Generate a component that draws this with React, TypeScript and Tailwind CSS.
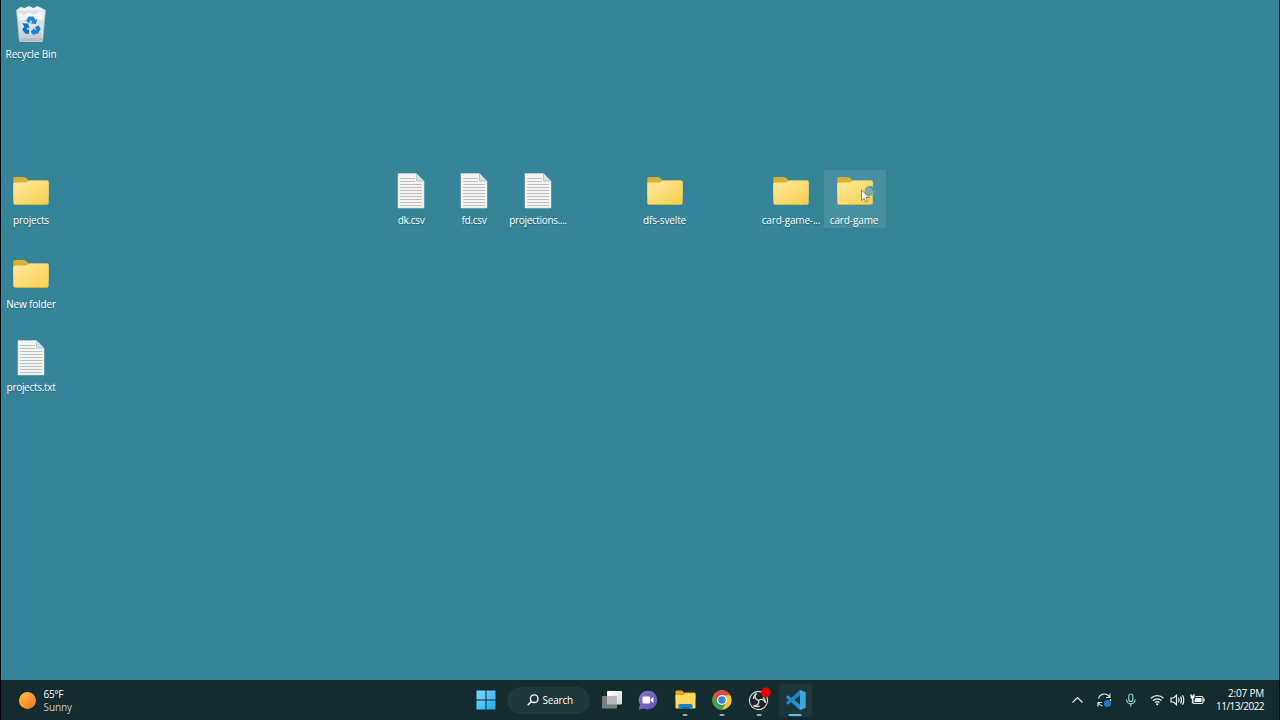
import type { ReactNode } from "react";

const FolderIcon = () => (
  <svg width="36" height="30" viewBox="0 0 36 30">
    <defs>
      <linearGradient id="folder" x1="0" y1="0" x2="1" y2="1">
        <stop offset="0" stopColor="#ffeaa2" />
        <stop offset="1" stopColor="#f8cf4b" />
      </linearGradient>
    </defs>
    <path d="M.3 3Q.3 1 2 1h9q1 0 2 1l3 2.500h18q1.700 0 1.700 2V20H.3z" fill="#d9b137" />
    <path d="M.3 8Q.3 6.500 1.800 6.500H12q1.500 0 2.500-.8l.8-.6q.7-.5 1.700-.5h17q1.700 0 1.700 2V26.500q0 2-2 2H2q-1.700 0-1.700-2z" fill="url(#folder)" />
    <path d="M.8 27.500q.5 1 1.500 1h31.500q1 0 1.500-1" fill="none" stroke="#e3b93d" strokeWidth=".8" />
  </svg>
);

const FileIcon = () => (
  <svg width="28" height="36" viewBox="0 0 28 36">
    <path d="M1 .5h18.500L27 8v27H1z" fill="#f4f4f3" stroke="#d2d8d8" strokeWidth=".6" />
    <path
      d="M3 5.500h15M3 8.500h15M3 11.500h22M3 14.500h22M3 17.500h22M3 20.500h22M3 23.500h22M3 26.500h22M3 29.500h22M3 32.500h22"
      stroke="#c0c0c0"
      strokeWidth="1"
    />
    <path d="M19.500.5V8H27z" fill="#d5e1e6" stroke="#94b1bb" strokeWidth=".6" />
  </svg>
);

const BinIcon = () => (
  <svg width="32" height="38" viewBox="0 0 32 38">
    <path d="M1.500 5l4-3 4 1 4-2 5 2 4-2 4 2 4 2-1 5H3z" fill="#eef1f2" />
    <path d="M1.500 5.500h29L27.500 36q-.2 1-1.500 1H6q-1.300 0-1.500-1z" fill="#d9e2e7" />
    <path d="M3 7l6 3 5-3 5 3 6-4 4 2-1 7H4z" fill="#f3f5f6" />
    <path d="M4 27l6-2 5 4 6-4 6 3-1 6H5z" fill="#c6d1d8" />
    <path d="M1.500 5.500l3 30.500h23l3-30.500" fill="none" stroke="#b8c8cf" strokeWidth=".8" />
    <path d="M5 33h22l-.5 3.500h-21z" fill="#b4bfc5" />
    <g transform="translate(16 19.500) scale(1.050) translate(-16 -19.700)">
      <path d="M11.200 16.200l2.600-4.200h4.400l2.200 3.200 1.700-1-1.500 5.200-5.200-.8 1.800-1.200-1.300-1.800-1.700 2.800z" fill="#2588cf" />
      <path d="M7.700 18.500l5.300.2 1.800 4.600-1.800-.8-1.300 1.900h2.500v4.100h-3.700L7.700 24.500l1.800-3z" fill="#1871ba" />
      <path d="M15.600 26.800l3.700-3.900v1.900h1.800l-1.300-2.400 3.500-2 1.900 3.500-2.600 4.600h-3.300v2z" fill="#2181cb" />
    </g>
  </svg>
);

type Item = {
  name: string;
  x: number;
  y: number;
  kind: "bin" | "folder" | "file";
  tracking: string;
  selected?: boolean;
};

const items: Item[] = [
  { name: "Recycle Bin", x: 31, y: 3, kind: "bin", tracking: "pt-px tracking-[-0.13px]" },
  { name: "projects", x: 31, y: 170, kind: "folder", tracking: "tracking-[-0.2px]" },
  { name: "New folder", x: 31, y: 253, kind: "folder", tracking: "pt-px tracking-[-0.15px]" },
  { name: "projects.txt", x: 31, y: 337, kind: "file", tracking: "tracking-[-0.3px]" },
  { name: "dk.csv", x: 411, y: 170, kind: "file", tracking: "tracking-[-0.3px]" },
  { name: "fd.csv", x: 474, y: 170, kind: "file", tracking: "tracking-[-0.25px]" },
  { name: "projections....", x: 538, y: 170, kind: "file", tracking: "tracking-[-0.35px]" },
  { name: "dfs-svelte", x: 664.5, y: 170, kind: "folder", tracking: "tracking-[-0.15px]" },
  { name: "card-game-...", x: 791, y: 170, kind: "folder", tracking: "tracking-[-0.17px]" },
  { name: "card-game", x: 855, y: 170, kind: "folder", tracking: "pr-[2px] tracking-[-0.12px]", selected: true },
];

const DesktopItem = ({ name, x, y, kind, tracking, selected }: Item) => (
  <div
    className={`absolute flex h-[58px] w-[62px] -translate-x-1/2 flex-col items-center ${
      selected ? "bg-[#488fa1]" : ""
    }`}
    style={{ left: x, top: y }}
  >
    <div className="flex h-[42px] shrink-0 items-center justify-center">
      {kind === "bin" ? <BinIcon /> : kind === "folder" ? <FolderIcon /> : <FileIcon />}
    </div>
    <span
      className={`mt-[2px] text-[10px] leading-[13px] whitespace-nowrap text-white [text-shadow:0_1px_1px_rgba(0,0,0,0.25)] ${tracking}`}
    >
      {name}
    </span>
  </div>
);

const Cursor = () => (
  <svg className="absolute top-[184px] left-[860px]" width="16" height="20" viewBox="0 0 16 20">
    <circle cx="9.500" cy="7" r="4" fill="#86ab9b" stroke="#75a9a2" strokeWidth="2" />
    <path d="M9.500 3a4 4 0 0 1 4 4" fill="none" stroke="#4594af" strokeWidth="2" />
    <path d="M1.500 6v10.500L4 14.200l1.800 3.600 1.800-.9-1.700-3.500h3.400z" fill="#fff" stroke="#7a6a45" strokeWidth=".8" />
  </svg>
);

const StartIcon = () => (
  <svg width="20" height="20" viewBox="0 0 20 20">
    <defs>
      <linearGradient id="start" x1="0" y1="0" x2="20" y2="20" gradientUnits="userSpaceOnUse">
        <stop offset="0" stopColor="#83dcfb" />
        <stop offset="1" stopColor="#1ba4ed" />
      </linearGradient>
    </defs>
    <path d="M1 .5h8.500v9H.5V1zM10.500.5H19l.5.5v8.500h-9zM.5 10.500h9v9H1l-.5-.5zM10.500 10.500h9V19l-.5.5h-8.500z" fill="url(#start)" />
  </svg>
);

const TaskViewIcon = () => (
  <svg width="20" height="20" viewBox="0 0 20 20">
    <defs>
      <linearGradient id="task" x1="0" y1="0" x2="1" y2="1">
        <stop offset="0" stopColor="#fff" />
        <stop offset="1" stopColor="#d4d6d6" />
      </linearGradient>
    </defs>
    <rect x="5" y="1" width="15" height="13.500" rx="1" fill="url(#task)" />
    <rect x="0" y="6" width="15" height="12.500" rx="1" fill="#777f80" />
    <path d="M5 6h10v8.500H5z" fill="#b5b9b9" />
  </svg>
);

const ChatIcon = () => (
  <svg width="20" height="20" viewBox="0 0 20 20">
    <defs>
      <linearGradient id="chat" x1="0" y1="0" x2="1" y2="1">
        <stop offset="0" stopColor="#8e72ca" />
        <stop offset="1" stopColor="#5858b4" />
      </linearGradient>
    </defs>
    <path d="M10 .7a9.300 9.300 0 1 1-4 17.700L.8 19.500 2 14.800A9.300 9.300 0 0 1 10 .7z" fill="url(#chat)" />
    <rect x="4.500" y="6.500" width="7.500" height="7" rx="1" fill="#fff" />
    <path d="M12.500 9.200l3-2.200v6l-3-2.200z" fill="#fff" />
  </svg>
);

const ExplorerIcon = () => (
  <svg width="21" height="20" viewBox="0 0 21 20">
    <path d="M.5 1.500q0-1 1-1h5.500l2 2h10.500q1 0 1 1V9H.5z" fill="#e4a91d" />
    <path d="M.5 5h8l1.500-1.500h9.500q1 0 1 1v13q0 1-1 1h-18q-1 0-1-1z" fill="#ffda60" />
    <path d="M3.500 19V15.500q0-1.500 1.500-1.500h11q1.500 0 1.500 1.500V19z" fill="#1883c6" />
    <path d="M6.500 17h8v2h-8z" fill="#12649f" />
  </svg>
);

const ChromeIcon = () => (
  <svg width="20" height="20" viewBox="0 0 20 20">
    <circle cx="10" cy="10" r="9.700" fill="#f4c52d" />
    <path d="M1.600 5.150A9.700 9.700 0 0 1 18.400 5.150H10L5.800 12.400z" fill="#e04a3a" />
    <path d="M1.600 5.150A9.700 9.700 0 0 0 10 19.700l4.200-7.300-8.400 0z" fill="#37a451" />
    <circle cx="10" cy="10" r="4.900" fill="#fff" />
    <circle cx="10" cy="10" r="3.800" fill="#3b82e0" />
  </svg>
);

const ObsIcon = () => (
  <svg className="overflow-visible" width="22" height="22" viewBox="0 0 22 22">
    <circle cx="10.500" cy="11.500" r="9.100" fill="#202326" stroke="#d9dcdd" strokeWidth="1.100" />
    <g fill="none" stroke="#d3d6d7" strokeWidth="1.400">
      <path d="M8.500 4.500a4 4 0 0 0 2 7" />
      <path d="M17.400 14a4 4 0 0 0-7-2.200" />
      <path d="M5.600 16.500a4 4 0 0 0 5-5" />
      <path d="M8.500 4.500q-3 2-3 5.500M17.400 14q.3-3.500-2.400-5.700M5.600 16.500q3 2 6 .3" />
    </g>
    <circle cx="18" cy="3.500" r="4.900" fill="#ef0000" />
  </svg>
);

const CodeIcon = () => (
  <svg width="21" height="20" viewBox="0 0 21 20">
    <path d="M15 0l5.500 2.300v15.400L15 20 .8 7.200 3 5.200 15 14.500z" fill="#2592d2" />
    <path d="M15 0L.8 12.800 3 14.800 15 5.500z" fill="#1e88c7" />
    <path d="M15 0l5.500 2.300v15.400L15 20z" fill="#38a8e2" />
  </svg>
);

const TaskButton = ({ children, state }: { children: ReactNode; state?: "open" | "active" }) => (
  <div
    className={`relative flex h-[33px] w-[33px] items-center justify-center rounded-[3px] ${
      state === "active" ? "bg-[#1d363b]" : ""
    }`}
  >
    {children}
    {state && (
      <span
        className={`absolute bottom-[1px] left-1/2 h-[2px] -translate-x-1/2 rounded-full ${
          state === "active" ? "w-[13px] bg-[#63bde5]" : "w-[5px] bg-[#a2abad]"
        }`}
      />
    )}
  </div>
);

const Tray = () => (
  <svg width="136" height="20" viewBox="0 0 136 20" fill="none" stroke="#e8eded" strokeWidth="1.200">
    <path d="M2.500 12.500l5-5 5 5" />
    <g stroke="#d5dddd">
      <path d="M28.500 8.500a6 6 0 0 1 11-1.500M40 3.500V7.500h-4M28 16.500v-4h4M28.500 13a6 6 0 0 0 4 3M40.500 9v2" />
    </g>
    <circle cx="37.500" cy="13.500" r="3.500" fill="#207ac8" stroke="none" />
    <g stroke="#83d0d5">
      <rect x="58.800" y="4" width="4" height="7.500" rx="2" />
      <path d="M56.500 9.500a4.300 4.300 0 0 0 8.600 0M60.800 14v2.500" />
    </g>
    <g>
      <path d="M81 8.200a9 9 0 0 1 12.500 0M83 10.500a6.200 6.200 0 0 1 8.500 0M85 12.700a3.400 3.400 0 0 1 4.500 0" />
      <circle cx="87.250" cy="14.300" r="1" fill="#fff" stroke="none" />
    </g>
    <path d="M101 8h2.500l3-2.700v9.400l-3-2.700H101zM108.500 7.800q1.200 2.200 0 4.400M110.500 6.500q2 3.500 0 7M112.500 5.200q2.500 4.800 0 9.600" />
    <g>
      <path d="M125.500 6.500h6q1.500 0 1.500 1.500v4q0 1.500-1.500 1.500h-7q-1.500 0-1.500-1.500v-2" />
      <path d="M125.500 8h6v4h-7v-2z" fill="#fff" stroke="none" />
      <path d="M134 8.500v3" strokeWidth="1.300" />
      <path d="M121 4v2M124 4v2M122.500 8v5.500" />
      <path d="M120.500 5.500h4v1.500q0 2-2 2t-2-2z" fill="#fff" stroke="none" />
    </g>
  </svg>
);

const Taskbar = () => (
  <footer className="flex h-10 shrink-0 items-center bg-[#142b30] text-[10px] leading-[13px] text-white">
    <div className="flex flex-1 items-center gap-[7.5px] pl-[18px]">
      <div className="h-[17px] w-[17px] rounded-full bg-linear-to-br from-[#ffbd48] to-[#ef7515]" />
      <div className="pt-px">
        <div className="tracking-[-0.3px]">65°F</div>
        <div className="tracking-[-0.1px] text-[#c1cccf]">Sunny</div>
      </div>
    </div>
    <div className="flex items-center pr-[2px]">
      <TaskButton><StartIcon /></TaskButton>
      <div className="mx-[5px] flex h-[27px] w-[83px] items-center justify-center gap-[4px] rounded-full bg-[#20373c] pl-[2px]">
        <svg width="12" height="12" viewBox="0 0 12 12" fill="none" stroke="#f4f7f7" strokeWidth="1.400">
          <circle cx="7.200" cy="4.700" r="3.800" />
          <path d="M4.400 7.500L.7 11.200" />
        </svg>
        <span className="tracking-[-0.2px]">Search</span>
      </div>
      <div className="flex gap-[3.7px]">
        <TaskButton><TaskViewIcon /></TaskButton>
        <TaskButton><ChatIcon /></TaskButton>
        <TaskButton state="open"><ExplorerIcon /></TaskButton>
        <TaskButton state="open"><ChromeIcon /></TaskButton>
        <TaskButton state="open"><ObsIcon /></TaskButton>
        <TaskButton state="active"><CodeIcon /></TaskButton>
      </div>
    </div>
    <div className="flex flex-1 items-center justify-end gap-[10px] pr-[15px]">
      <Tray />
      <div className="w-[48px] text-right whitespace-nowrap">
        <div className="tracking-[-0.2px]">2:07 PM</div>
        <div className="tracking-[-0.5px]">11/13/2022</div>
      </div>
    </div>
  </footer>
);

export default function App() {
  return (
    <div className="flex h-[720px] w-[1280px] flex-col overflow-hidden border-x border-[#03080a] bg-[#358497] font-['Open_Sans','Noto_Sans',sans-serif]">
      <main className="relative -mx-px flex-1">
        {items.map((item) => (
          <DesktopItem key={item.name} {...item} />
        ))}
        <Cursor />
      </main>
      <Taskbar />
    </div>
  );
}
